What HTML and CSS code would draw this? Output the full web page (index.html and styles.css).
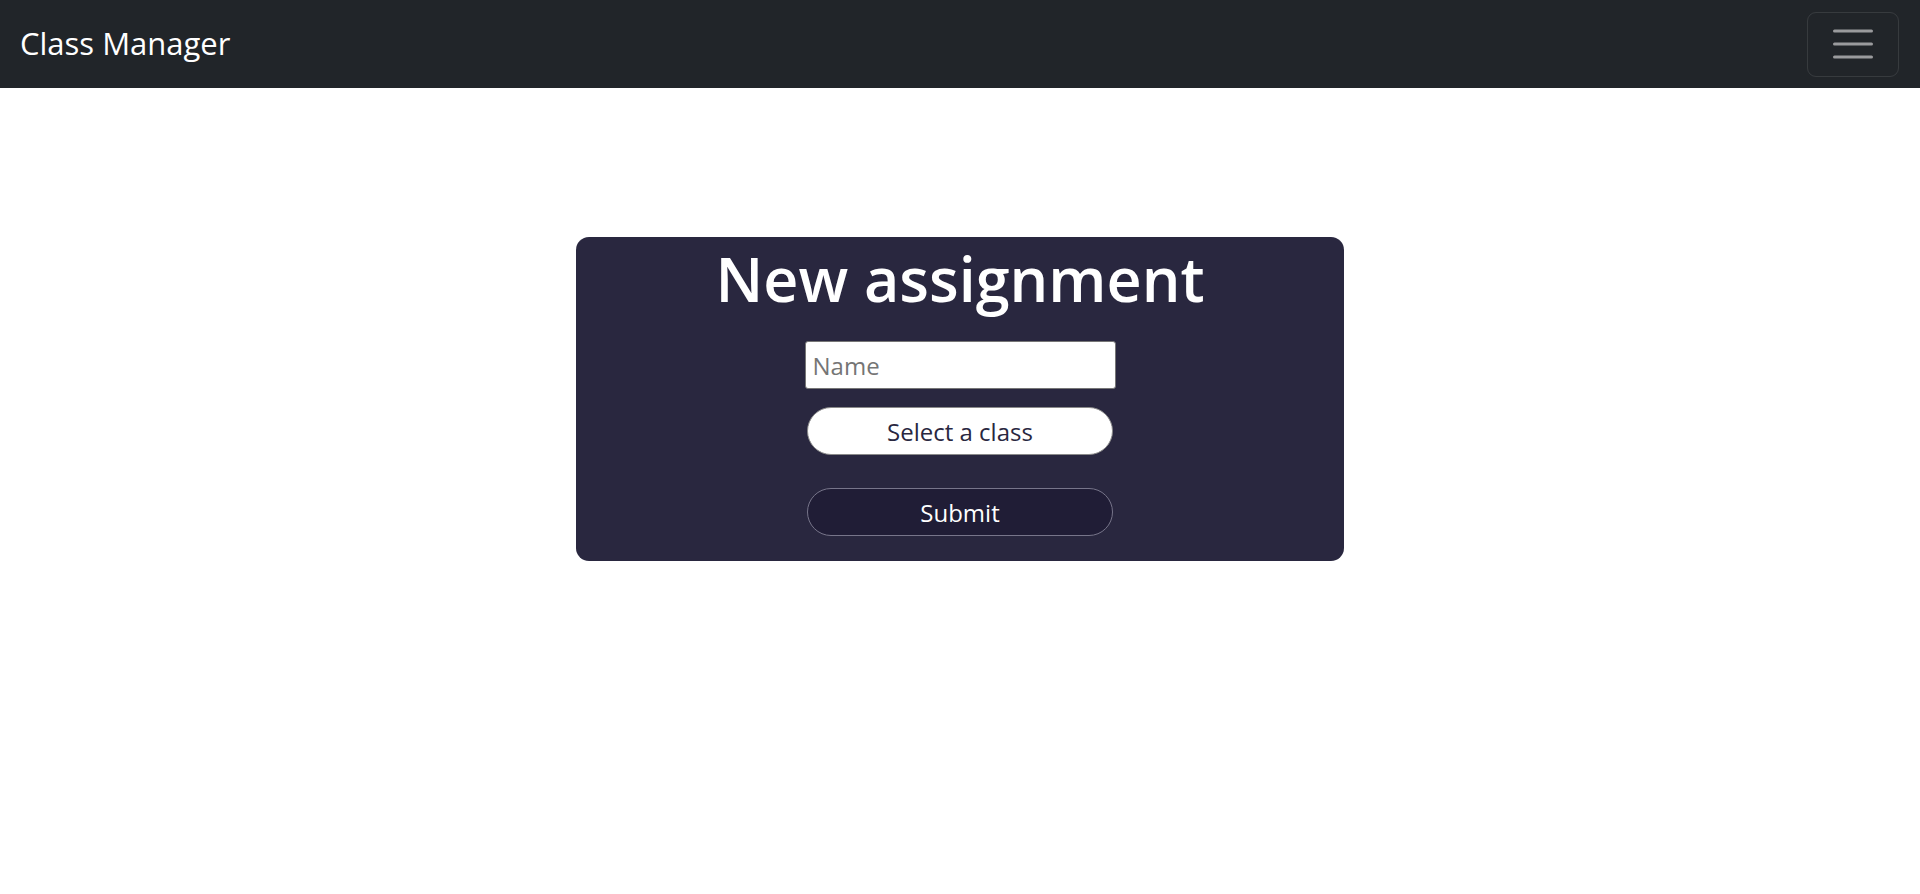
FILE: index.html
```html
<!DOCTYPE html>
<html lang="en">
<head>
  <meta charset="UTF-8">
  <meta name="viewport" content="width=device-width, initial-scale=1.0">
  <title>Class Manager</title>
  <link rel="stylesheet" href="styles.css">
</head>
<body>
  <nav class="navbar">
    <a class="brand" href="#">Class Manager</a>
    <button class="toggler" type="button" aria-label="Toggle navigation">
      <svg width="40" height="30" viewBox="0 0 40 30">
        <path d="M1.5 2h37M1.5 15h37M1.5 28h37" stroke="#9a9b9d" stroke-width="3" stroke-linecap="round"/>
      </svg>
    </button>
  </nav>

  <main class="page">
    <form class="card" id="assignment-form">
      <h1 class="card-title">New assignment</h1>
      <input class="field" type="text" id="name" name="name" placeholder="Name">
      <button class="pill pill-light" type="button">Select a class</button>
      <button class="pill pill-dark" type="submit">Submit</button>
    </form>
  </main>
</body>
</html>
```

FILE: styles.css
```css
body {
  margin: 0;
  font-family: "Open Sans", "Noto Sans", sans-serif;
  background-color: #fff;
}

/* Верхня панель */
.navbar {
  height: 88px;
  background-color: #212529;
  display: flex;
  align-items: center;
  justify-content: space-between;
  padding: 0 21px 0 20px;
}

.brand {
  color: #fff;
  text-decoration: none;
  font-size: 31px;
  padding-bottom: 3px;
}

.toggler {
  width: 92px;
  height: 65px;
  display: flex;
  align-items: center;
  justify-content: center;
  background: transparent;
  border: 1px solid rgba(255, 255, 255, 0.1);
  border-radius: 9px;
  padding: 0;
  cursor: pointer;
}

/* Картка з формою */
.page {
  padding-top: 149px;
}

.card {
  width: 768px;
  margin: 0 auto;
  box-sizing: border-box;
  background-color: #29273f;
  border-radius: 13px;
  padding: 2px 0 25px;
  display: flex;
  flex-direction: column;
  align-items: center;
}

.card-title {
  margin: 0 0 22px;
  color: #fff;
  font-size: 61px;
  font-weight: 600;
  line-height: 80px;
}

.field {
  width: 311px;
  height: 48px;
  box-sizing: border-box;
  margin: 0 0 18px;
  padding: 0 7px;
  border: 1px solid #767676;
  border-radius: 3px;
  font-family: inherit;
  font-size: 24px;
  color: #212529;
}

.field::placeholder {
  color: #757575;
}

.pill {
  width: 306px;
  height: 48px;
  box-sizing: border-box;
  border-radius: 24px;
  border: 1px solid #8a8a8a;
  font-family: inherit;
  font-size: 24px;
  cursor: pointer;
}

.pill-light {
  background-color: #fff;
  color: #29273f;
  margin-bottom: 33px;
}

.pill-dark {
  background-color: #201d36;
  color: #fff;
  border-color: #77758a;
}
```
